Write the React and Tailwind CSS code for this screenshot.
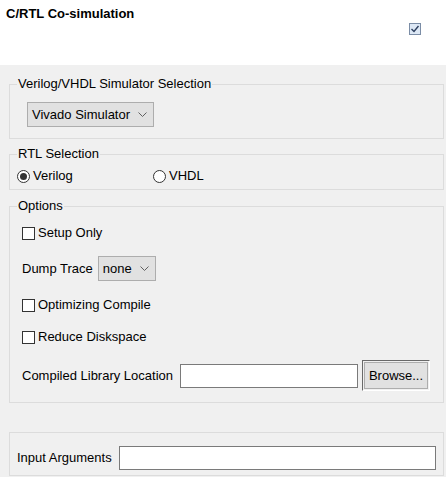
import React from 'react';

const font = { fontFamily: '"Liberation Sans", Arial, sans-serif' };

const Chevron = () => (
    <svg width="9" height="5" viewBox="0 0 9 5" className="shrink-0">
        <path d="M0.5 0.5 L4.5 4.5 L8.5 0.5" fill="none" stroke="#606060" strokeWidth="1" />
    </svg>
);

const Combo = ({ value, width }) => (
    <div className={`flex items-center justify-between h-[25px] bg-[#e1e1e1] border border-[#adadad] pl-[4px] pr-[6px] ${width}`}>
        <span className="text-[13px] text-black">{value}</span>
        <Chevron />
    </div>
);

const Check = ({ label }) => (
    <div className="flex items-center h-4">
        <span className="w-[13px] h-[13px] border border-[#333] bg-white shrink-0" />
        <span className="ml-[3px] text-[13px] text-black">{label}</span>
    </div>
);

const Radio = ({ label, checked }) => (
    <div className="flex items-center h-4">
        <span className="w-[13px] h-[13px] rounded-full border border-[#333] bg-white flex items-center justify-center shrink-0">
            {checked && <span className="w-[7px] h-[7px] rounded-full bg-[#333]" />}
        </span>
        <span className="ml-[3px] text-[13px] text-black">{label}</span>
    </div>
);

const Group = ({ title, className = '', children }) => (
    <fieldset className={`border border-[#dcdcdc] ml-[9px] w-[435px] ${className}`}>
        <legend className="ml-[7px] px-[1px] h-4 leading-4 text-[13px] text-black">{title}</legend>
        {children}
    </fieldset>
);

export default function App() {
    return (
        <div className="w-[446px] h-[477px] bg-[#f0f0f0] overflow-hidden" style={font}>
            <div className="bg-white h-[65px] relative">
                <div className="pl-[6px] pt-[6px] text-[13px] font-bold text-black leading-4">C/RTL Co-simulation</div>
                <div className="flex justify-end pr-[25px] mt-[1px]">
                    <span className="w-[12px] h-[12px] border border-[#7b8da6] bg-[#dde8f5] flex items-center justify-center">
                        <svg width="10" height="10" viewBox="0 0 10 10">
                            <path d="M1.5 5 L4 7.5 L8.5 2" fill="none" stroke="#2c3e5e" strokeWidth="1.4" />
                        </svg>
                    </span>
                </div>
            </div>

            <Group title="Verilog/VHDL Simulator Selection" className="mt-[11px] h-[63px]">
                <div className="pl-[17px] pt-[10px]">
                    <Combo value="Vivado Simulator" width="w-[127px]" />
                </div>
            </Group>

            <Group title="RTL Selection" className="mt-[7px] h-[44px]">
                <div className="flex items-center pl-[7px] pt-[6px]">
                    <div className="w-[136px]"><Radio label="Verilog" checked /></div>
                    <Radio label="VHDL" />
                </div>
            </Group>

            <Group title="Options" className="mt-[8px] h-[205px]">
                <div className="flex flex-col pl-[12px] pr-[13px]">
                    <div className="mt-[11px]"><Check label="Setup Only" /></div>
                    <div className="mt-[15px] flex items-center">
                        <span className="text-[13px] text-black mr-[5px]">Dump Trace</span>
                        <Combo value="none" width="w-[58px]" />
                    </div>
                    <div className="mt-[16px]"><Check label="Optimizing Compile" /></div>
                    <div className="mt-[16px]"><Check label="Reduce Diskspace" /></div>
                    <div className="mt-[15px] flex items-center">
                        <span className="text-[13px] text-black w-[158px]">Compiled Library Location</span>
                        <div className="w-[178px] h-[24px] bg-white border border-[#7a7a7a]" />
                        <div className="ml-[4px] w-[68px] h-[31px] border border-t-[#696969] border-l-[#696969] border-r-white border-b-white p-[1px]">
                            <div className="w-full h-full bg-[#e1e1e1] border border-[#adadad] flex items-center justify-center text-[13px] text-black">
                                Browse...
                            </div>
                        </div>
                    </div>
                </div>
            </Group>

            <div className="mt-[29px] ml-[9px] w-[435px] h-[44px] border border-[#dcdcdc] flex items-end pb-[5px] pl-[7px] pr-[7px]">
                <div className="flex items-center w-full">
                    <span className="text-[13px] text-black w-[102px]">Input Arguments</span>
                    <div className="flex-1 h-[24px] bg-white border border-[#7a7a7a]" />
                </div>
            </div>
        </div>
    );
}
